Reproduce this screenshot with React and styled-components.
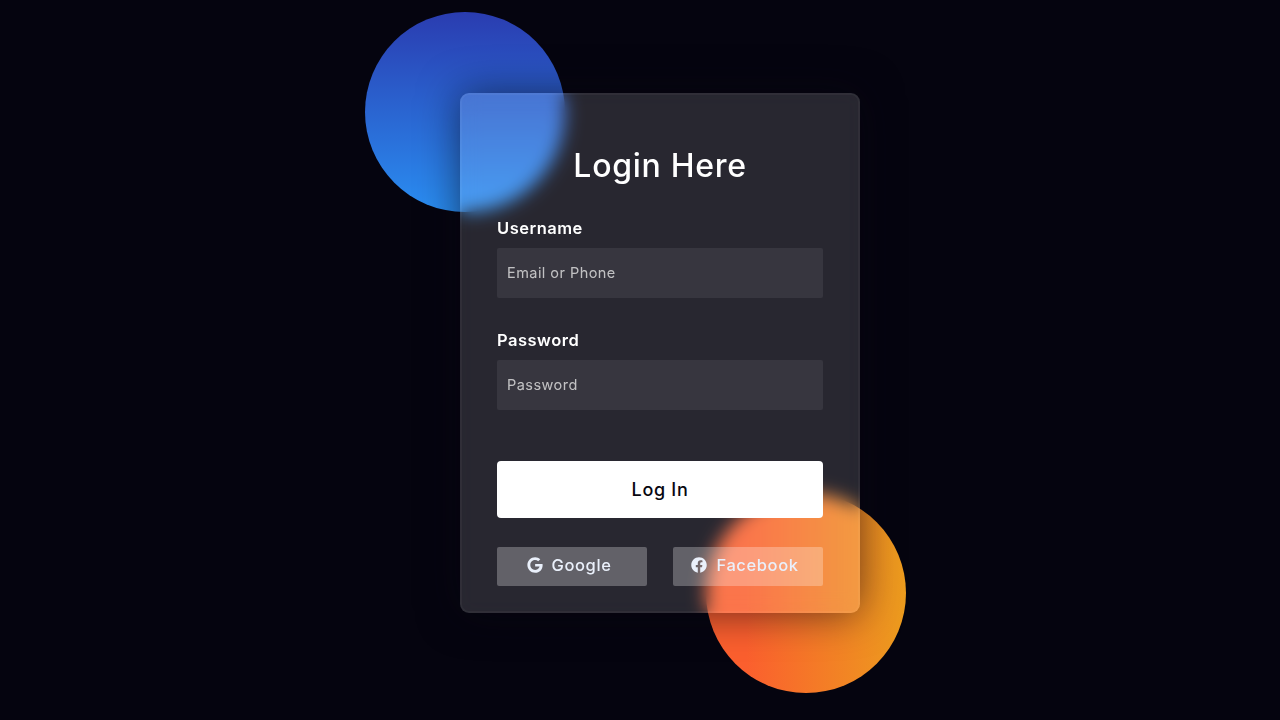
import React from 'react';
import styled, { createGlobalStyle } from 'styled-components';
import { FaGoogle, FaFacebook } from 'react-icons/fa';

const GlobalStyle = createGlobalStyle`
  * {
    box-sizing: border-box;
  }

  body {
    margin: 0;
    background-color: #05040f;
    font-family: Inter, "Open Sans", sans-serif;
  }
`;

const Page = styled.div`
  display: flex;
  justify-content: center;
  height: 720px;
  overflow: hidden;
  padding: 93px 0 0 40px;
`;

const Scene = styled.div`
  position: relative;
  width: 400px;
  height: 520px;
`;

const Circle = styled.div`
  position: absolute;
  width: 200px;
  height: 200px;
  border-radius: 50%;
`;

const BlueCircle = styled(Circle)`
  left: -95px;
  top: -81px;
  background: linear-gradient(#2a3cb0, #2a8ef2);
`;

const OrangeCircle = styled(Circle)`
  right: -46px;
  bottom: -80px;
  background: linear-gradient(to right, #fb5f2e 20%, #ec9c1e);
`;

const Form = styled.form`
  position: relative;
  display: flex;
  flex-direction: column;
  height: 520px;
  padding: 50px 35px 0;
  background-color: rgba(255, 255, 255, 0.14);
  backdrop-filter: blur(9px);
  border: 2px solid rgba(255, 255, 255, 0.04);
  border-radius: 9px;
  box-shadow: 0 0 40px rgba(8, 7, 16, 0.6);
`;

const Title = styled.h3`
  margin: 0;
  font-size: 32px;
  font-weight: 500;
  line-height: 41px;
  letter-spacing: 0.7px;
  text-align: center;
  color: #fff;
`;

const Label = styled.label`
  display: block;
  margin-top: 30px;
  font-size: 16.5px;
  font-weight: 600;
  line-height: 24px;
  letter-spacing: 0.5px;
  color: #fff;
`;

const Input = styled.input`
  display: block;
  width: 100%;
  height: 50px;
  margin-top: 8px;
  padding: 0 10px 2px;
  background-color: rgba(255, 255, 255, 0.07);
  border: none;
  border-radius: 2px;
  font-family: inherit;
  font-size: 14.5px;
  font-weight: 400;
  letter-spacing: 0.45px;
  color: #fff;

  &::placeholder {
    color: #e5e5e5;
    opacity: 0.8;
  }
`;

const LoginButton = styled.button`
  width: 100%;
  height: 57px;
  margin-top: 51px;
  background-color: #fff;
  border: none;
  border-radius: 4px;
  font-family: inherit;
  font-size: 18px;
  font-weight: 500;
  letter-spacing: 0.7px;
  color: #080710;
`;

const SocialRow = styled.div`
  display: flex;
  justify-content: space-between;
  margin-top: 29px;
`;

const SocialButton = styled.div`
  display: flex;
  align-items: center;
  justify-content: center;
  gap: 9px;
  width: 150px;
  height: 39px;
  padding: 0 6px 3px 0;
  background-color: rgba(255, 255, 255, 0.27);
  border-radius: 2px;
  font-size: 16.5px;
  font-weight: 500;
  letter-spacing: 0.6px;
  color: #eaf0fb;
`;

export default function App() {
  return (
    <Page>
      <GlobalStyle />
      <Scene>
        <BlueCircle />
        <OrangeCircle />
        <Form onSubmit={(e) => e.preventDefault()}>
          <Title>Login Here</Title>
          <Label htmlFor="username">Username</Label>
          <Input id="username" type="text" placeholder="Email or Phone" />
          <Label htmlFor="password">Password</Label>
          <Input id="password" type="password" placeholder="Password" />
          <LoginButton type="submit">Log In</LoginButton>
          <SocialRow>
            <SocialButton><FaGoogle size={16} />Google</SocialButton>
            <SocialButton><FaFacebook size={16} />Facebook</SocialButton>
          </SocialRow>
        </Form>
      </Scene>
    </Page>
  );
}
